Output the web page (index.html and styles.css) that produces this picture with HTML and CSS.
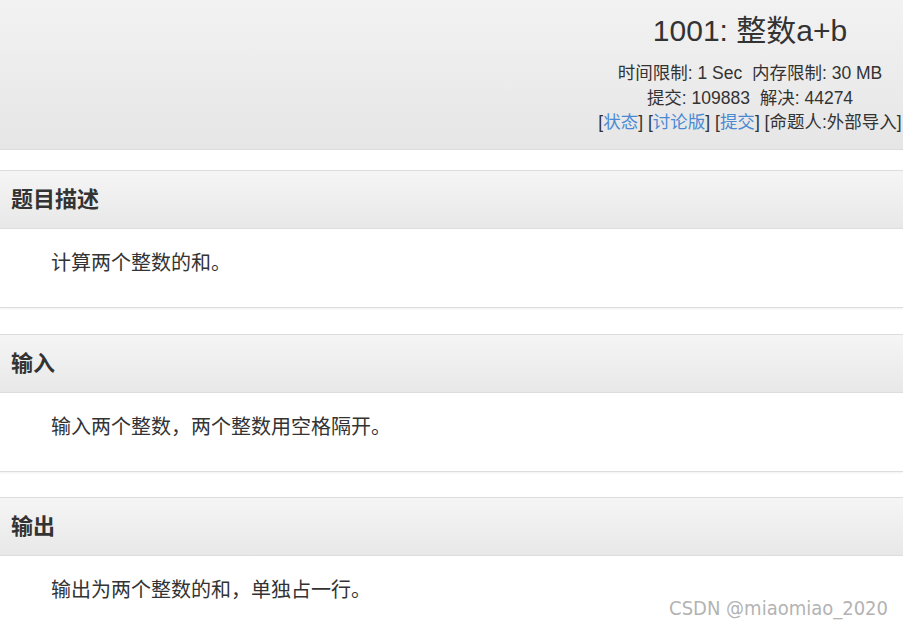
FILE: index.html
```html
<!DOCTYPE html>
<html lang="zh">
<head>
<meta charset="utf-8">
<title>1001: 整数a+b</title>
<link rel="stylesheet" href="styles.css">
</head>
<body>
<div class="page">
  <header class="hero">
    <div class="hero-inner">
      <h2 class="title">1001: 整数a+b</h2>
      <div class="meta">时间限制: 1 Sec&nbsp;&nbsp;内存限制: 30 MB</div>
      <div class="meta">提交: 109883&nbsp;&nbsp;解决: 44274</div>
      <div class="meta">[<a href="#">状态</a>] [<a href="#">讨论版</a>] [<a href="#">提交</a>] [命题人:外部导入]</div>
    </div>
  </header>

  <main class="panels">
    <section class="panel">
      <div class="panel-heading">题目描述</div>
      <div class="panel-body"><p>计算两个整数的和。</p></div>
    </section>

    <section class="panel">
      <div class="panel-heading">输入</div>
      <div class="panel-body"><p>输入两个整数，两个整数用空格隔开。</p></div>
    </section>

    <section class="panel">
      <div class="panel-heading">输出</div>
      <div class="panel-body"><p>输出为两个整数的和，单独占一行。</p></div>
    </section>
  </main>

  <div class="watermark">CSDN @miaomiao_2020</div>
</div>
</body>
</html>
```

FILE: styles.css
```css
html, body {
  margin: 0;
  padding: 0;
  background: #fff;
  overflow: hidden;
}
body {
  font-family: "Liberation Sans", Arial, "Noto Sans CJK SC", sans-serif;
  color: #333;
}
.page {
  position: relative;
  width: 903px;
  height: 626px;
  overflow: hidden;
}
.hero {
  height: 149px;
  border-bottom: 1px solid #dcdcdc;
  background: linear-gradient(to bottom, #f2f2f2 0%, #e6e6e6 100%);
}
.hero-inner {
  padding-left: 597px;
  padding-top: 14px;
  text-align: center;
  white-space: nowrap;
}
.title {
  margin: 0 0 13px;
  font-size: 30px;
  font-weight: normal;
  line-height: 34px;
  color: #333;
}
.meta {
  font-size: 17.5px;
  line-height: 24.5px;
  color: #333;
}
.meta a {
  color: #4a8ad4;
  text-decoration: none;
}
.panels {
  display: flex;
  flex-direction: column;
  gap: 25.25px;
  padding-top: 20px;
}
.panel {
  border-top: 1px solid #dddddd;
  border-bottom: 1px solid #dddddd;
  box-shadow: 0 1px 2px rgba(0, 0, 0, 0.06);
}
.panel-heading {
  padding: 15px 11px;
  line-height: 27.25px;
  font-size: 22px;
  font-weight: bold;
  color: #333;
  background: linear-gradient(to bottom, #f5f5f5 0%, #e8e8e8 100%);
  border-bottom: 1px solid #dddddd;
}
.panel-body {
  padding: 20px 15px 30px;
}
.panel-body p {
  margin: 0;
  font-size: 20px;
  line-height: 28px;
  text-indent: 36px;
  color: #333;
}
.watermark {
  position: absolute;
  right: 15px;
  bottom: 6px;
  font-family: "DejaVu Sans Condensed", "Liberation Sans Narrow", "Liberation Sans", sans-serif;
  font-size: 20px;
  color: #b3b3b3;
}
```
